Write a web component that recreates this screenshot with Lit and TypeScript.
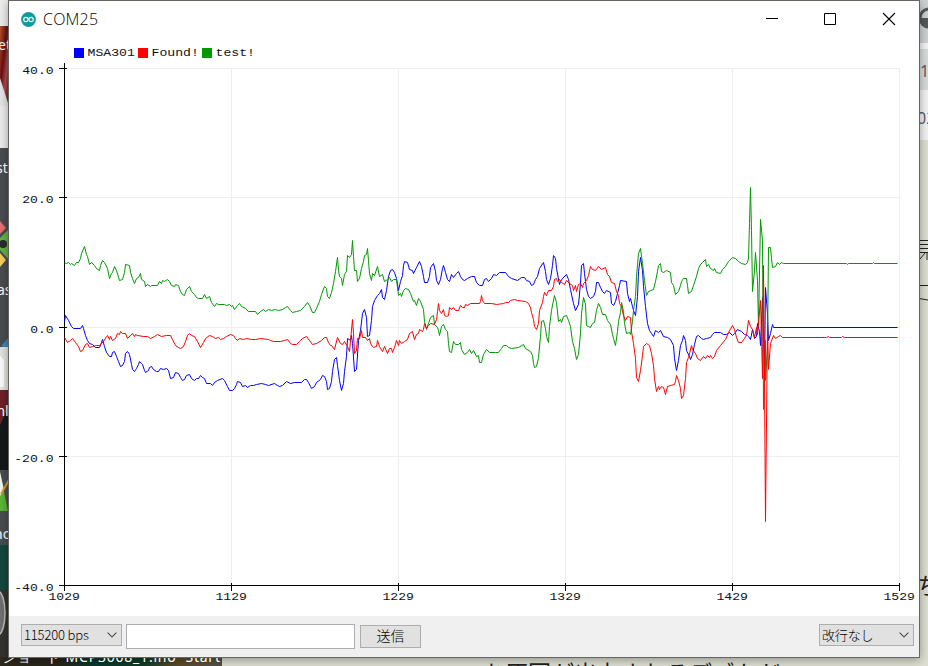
import { LitElement, html, svg, css } from "lit";
import { customElement, property } from "lit/decorators.js";

// Each trace is a list of runs: an origin on the canvas, then x,y pairs in thirds of a pixel.
type Run = [number, number, string];

const BLUE: Run[] = [
  [60, 230, "13,273 16,257 26,272 33,290 40,294 61,296 67,287 71,296 75,315 82,332 88,341 97,344 106,351 118,351 123,338 128,329 133,350 138,368 148,379 153,378 158,368 164,364 170,378 176,393 181,409 187,405 192,394 197,369 203,364 208,374 213,404 218,418 224,424 229,414 234,402 239,395 243,400 248,402 253,420 257,427 264,421 269,411 275,408 281,417 288,424 295,424 302,416 310,418 318,415 325,420 331,445 340,441 347,428 356,430 361,443 367,451 374,448 380,436 388,433 395,445 402,451 408,446 415,446 421,437 427,443 433,445 439,459 450,460 457,465 464,457 473,450 488,445 494,452 502,469 509,480"],
  [220, 230, "37,481 43,475 48,463 53,454 61,458 67,468 76,466 83,472 90,466 100,467 110,463 124,460 135,464 145,465 164,461 171,465 179,469 186,465 199,455 210,460 222,458 245,457 253,448 260,449 265,458 270,470 275,475 283,470 290,458 300,448 308,437 314,440 318,455 322,478 328,474 334,455 337,425 343,389 349,382 353,405 358,450 364,482 369,460 374,425 379,380 383,325 391,330 394,316 397,340 403,425 409,418 415,330 421,300 427,250 433,238 438,262 443,320 448,315 453,270 458,230 464,210 473,197 479,190 484,178 488,202 493,208 498,180 504,140 510,121 517,119 524,126 529,145"],
  [380, 230, "55,180 60,155 66,135 70,105 74,95 82,96 88,117 96,122 101,131 108,112 118,95 124,108 130,140 134,157 141,156 147,140 151,112 160,100 165,125 170,150 176,163 181,148 186,115 191,107 197,128 201,148 207,154 214,134 221,142 228,129 236,125 240,139 247,147 253,152 262,145 275,140 283,140 290,157 299,166 306,165 314,148 320,145 326,153 335,145 341,134 350,137 358,128 376,128 384,139 395,146 413,151 423,142 433,143 440,150 449,155 454,166 460,162 465,149 473,138 479,115 490,98 495,125 500,148 506,163 511,145 516,105 520,77 525,85 530,115"],
  [520, 230, "117,163 121,153 127,145 139,133 146,148 152,178 160,220 167,241 175,222 180,160 185,105 190,100 194,130 199,178 205,200 211,206 219,199 226,184 230,158 236,157 242,172 246,185 252,189 260,182 270,188 274,220 281,226 287,214 292,190 298,165 302,152 318,154 322,190 327,213 332,205 337,228 341,240 346,256 351,200 356,125 361,82 367,120 371,170 376,230 381,280 387,302 393,310 400,318 407,302 415,308 421,302 430,320 441,322 450,329 460,345 464,385 469,421 475,390 481,345 486,330 490,316 496,330 500,360 507,378 512,387 518,372 523,342"],
  [660, 180, "110,468 116,466 123,474 130,477 140,475 150,473 157,464 164,458 180,458 190,464 200,462 208,458 217,466 224,460 233,449 243,455 253,463 262,465 266,470 272,478 277,448 282,475 288,468 293,431 297,455 302,497 307,352 312,563 316,322 321,400 325,482 331,460 337,433 341,442 713,442"],
];

const RED: Run[] = [
  [60, 230, "13,322 22,338 30,332 38,325 46,338 54,350 61,364 68,361 76,342 82,341 89,351 97,350 108,347 118,346 124,340 130,335 138,318 143,316 148,328 152,319 157,331 165,325 172,310 178,312 181,304 186,311 196,309 203,324 212,317 218,310 223,318 227,312 232,317 250,318 262,319 272,325 283,319 292,313 303,318 318,317 331,317 338,328 346,345 354,353 362,356 371,350 376,335 382,316 388,310 395,315 404,319 411,335 421,351 430,337 436,324 448,317 458,320 466,325 474,323"],
  [220, 230, "0,328 10,324 20,318 32,313 40,316 47,324 53,331 59,326 70,328 80,325 93,329 106,327 120,326 145,327 150,332 160,335 180,334 192,330 203,329 212,339 218,344 230,343 237,334 248,325 260,320 269,330 276,343 290,341 304,332 312,322 319,322 324,338 330,345 335,345 344,358 352,322 360,340 367,344 374,334 381,350 388,363 392,330 397,268 400,310 403,370 409,360 413,325 419,325 424,300 428,321 435,321 441,332 447,325 450,340 456,348 460,352 468,350 473,331 479,348 487,364 494,350 502,369 508,355 514,356 518,368 523,352 530,330"],
  [380, 230, "55,346 59,332 65,341 73,335 82,328 88,309 96,305 103,328 110,314 116,310 119,298 126,304 130,298 134,280 140,296 146,285 152,279 162,282 169,268 172,245 175,220 179,240 185,249 190,239 194,256 200,259 206,255 209,232 215,238 221,231 226,242 234,240 240,226 246,232 252,232 257,222 261,227 272,220 298,220 301,213 305,197 308,212 313,220 335,221 350,223 370,220 376,216 384,218 392,211 404,209 412,212 435,214 444,220 450,232 455,247 460,268 464,290 470,298 475,280 479,242 486,218 490,200 494,188 500,197 506,182 514,180 521,170 524,148 530,145"],
  [520, 230, "113,155 118,148 124,158 132,163 140,152 147,160 156,167 161,181 166,166 170,184 174,164 180,161 186,173 191,160 200,152 206,135 211,110 218,117 225,120 235,109 243,117 255,113 261,132 268,138 275,158 283,160 288,185 295,195 299,220 305,230 310,255 316,270 321,260 331,262 335,305 340,340 346,385 350,443 355,455 360,420 366,375 371,350 379,340 388,346 393,370 399,405 404,445 409,485 415,468 419,478 424,468 430,473 436,493 442,470 450,466 463,463 467,455 469,436 474,450 480,475 484,506 490,495 495,445 499,398 505,382"],
  [660, 180, "94,497 98,508 106,521 113,535 121,541 130,528 135,534 142,526 148,533 152,526 156,535 162,528 170,512 180,497 195,477 205,458 217,436 224,448 230,472 236,488 244,486 252,474 260,466 266,421 271,438 277,447 282,472 288,443 291,462 296,430 301,361 304,470 307,596 311,256 314,600 317,1025 321,433 326,569 331,490 340,466 347,475 354,470 362,467 368,472 500,472 504,469 508,472 544,472 548,469 552,472 713,472"],
];

const GREEN: Run[] = [
  [60, 230, "13,98 20,101 25,97 30,104 35,99 43,105 48,98 55,97 60,85 65,70 73,50 78,72 82,80 88,102 93,98 102,107 108,116 118,121 122,105 127,92 134,98 142,115 148,145 153,131 158,128 163,108 169,122 178,150 187,148 192,128 197,104 208,106 212,128 217,145 223,160 228,146 234,142 240,130 245,148 252,154 257,168 262,163 270,169 275,166 291,166 298,154 303,159 308,152 314,155 322,149 328,153 335,165 342,169 347,162 354,167 361,183 367,192 373,195 380,177 388,170 395,184 402,193 408,202 415,205 428,204 434,194 440,204 449,200 454,218 463,228 468,221 475,223 494,223 500,226 508,223"],
  [220, 230, "35,230 38,227 44,237 51,226 58,221 65,229 75,235 85,243 106,243 113,253 122,243 129,239 137,243 146,239 155,241 167,238 175,242 187,239 195,232 203,228 210,240 218,247 230,243 242,240 252,228 262,217 268,225 276,246 283,247 290,234 297,215 305,193 313,169 319,174 323,198 329,205 335,187 339,160 345,125 352,82 356,120 359,138 364,145 368,166 374,132 379,125 383,77 388,82 394,72 397,30 401,80 403,121 409,122 413,154 419,146 424,115 430,95 434,75 440,73 442,55 445,90 448,130 454,151 458,131 464,135 472,109 479,139 486,132 494,154 503,148 508,142 514,153 520,148 529,149"],
  [380, 230, "55,195 60,190 64,198 70,180 76,175 84,178 92,190 99,213 103,210 109,225 116,205 122,215 129,238 134,275 139,298 146,280 152,262 160,255 164,282 171,293 175,302 179,316 185,290 191,283 196,298 201,305 205,340 209,363 214,367 220,335 225,343 234,344 240,338 245,358 254,373 262,367 269,358 275,371 281,361 289,380 295,375 299,397 304,397 311,373 320,359 329,366 345,367 354,366 363,355 370,346 378,346 385,353 395,355 415,352 430,344 437,355 450,365 456,377 460,400 464,412 470,408 475,382 480,320 485,275 490,271 495,295 500,320 505,337 509,290 515,240 523,197 528,217 536,274"],
  [520, 230, "120,268 124,278 130,260 140,257 146,272 152,290 158,335 163,355 169,388 175,372 181,310 185,250 190,203 195,222 200,286 210,291 217,280 224,278 229,240 236,221 241,233 247,254 256,252 262,272 270,284 276,312 281,325 286,346 291,305 296,275 300,248 304,217 309,245 314,280 319,309 328,307 332,313 337,275 341,240 345,200 350,140 356,70 361,55 367,100 373,150 379,195 386,184 400,179 406,155 411,125 415,106 421,100 425,124 431,127 438,122 450,127 455,156 461,165 467,192 475,183 480,165 485,155 490,146 498,145 502,165 506,190 513,184 520,165 528,140 535,115"],
  [660, 180, "120,252 128,247 136,238 139,258 145,253 152,265 160,271 164,265 168,277 180,280 188,269 197,260 205,245 217,232 226,235 235,244 245,251 257,254 262,247 265,235 268,130 271,22 275,150 278,335 283,270 286,217 291,300 296,440 301,118 307,180 310,689 315,480 317,600 321,500 326,202 332,202 335,235 338,263 346,260 353,248 359,253 363,248 369,251 558,251 561,253 564,251 636,251 639,248 642,251 713,251"],
];

// Snap every sample to the centre of its pixel.
const trace = (runs: Run[]) =>
  runs
    .flatMap(([ox, oy, pts]) =>
      pts.split(" ").map((p) => {
        const [x, y] = p.split(",").map(Number);
        return `${Math.floor(ox + x / 3) + 0.5},${Math.floor(oy + y / 3) + 0.5}`;
      })
    )
    .join(" ");

@customElement("serial-plot")
export class SerialPlot extends LitElement {
  static styles = css`
    :host { display: block; height: 578px; }
    svg { display: block; }
    .grid { stroke: #eeeeee; stroke-width: 1; shape-rendering: crispEdges; }
    .axis { stroke: #000; stroke-width: 1; shape-rendering: crispEdges; }
    .line { fill: none; stroke-width: 1; stroke-linejoin: bevel; }
    .blue { stroke: #0000ff; }
    .red { stroke: #ff0000; }
    .green { stroke: #009900; }
    text { font: 11.5px "Liberation Mono", monospace; fill: #111; }
  `;
  private label(x: number, y: number, t: string) {
    return svg`<text x=${x} y=${y} textLength=${t.length * 8 - 0.6} lengthAdjust="spacingAndGlyphs">${t}</text>`;
  }
  render() {
    const ys: [string, number][] = [["40.0", 68.5], ["20.0", 197.5], ["0.0", 327.5], ["-20.0", 456.5], ["-40.0", 585.5]];
    const xs: [string, number][] = [["1029", 64.5], ["1129", 231.5], ["1229", 398.5], ["1329", 565.5], ["1429", 732.5], ["1529", 899.5]];
    const legend: [string, string, number][] = [["MSA301", "#0000ff", 74], ["Found!", "#ff0000", 138], ["test!", "#009900", 202]];
    return html`<svg width="910" height="578" viewBox="9 38 910 578">
      ${legend.map(([t, c, x]) => svg`<rect x=${x} y="48" width="10" height="10" fill=${c}></rect>${this.label(x + 13.5, 56, t)}`)}
      ${ys.slice(0, 4).map(([, y]) => svg`<line class="grid" x1="65" x2="900" y1=${y} y2=${y}></line>`)}
      ${xs.slice(1).map(([, x]) => svg`<line class="grid" x1=${x} x2=${x} y1="68" y2="585"></line>`)}
      <path class="axis" d="M64.5 63V591M59 585.5H900"></path>
      ${ys.map(([t, y]) => svg`<line class="axis" x1="59" x2="67" y1=${y} y2=${y}></line>${this.label(54.2 - t.length * 8, y + 5, t)}`)}
      ${xs.map(([t, x]) => svg`<line class="axis" x1=${x} x2=${x} y1="583" y2="591"></line>${this.label(x - 16, 600, t)}`)}
      <polyline class="line blue" points=${trace(BLUE)}></polyline>
      <polyline class="line green" points=${trace(GREEN)}></polyline>
      <polyline class="line red" points=${trace(RED)}></polyline>
    </svg>`;
  }
}

@customElement("combo-box")
export class ComboBox extends LitElement {
  static styles = css`
    :host { display: block; }
    .box { box-sizing: border-box; height: 22px; display: flex; align-items: center; justify-content: space-between;
      padding: 0 4px 0 2px; background: #e1e1e1; border: 1px solid #adadad; }
    .text { font: 300 13px/20px "Noto Sans CJK JP", sans-serif; letter-spacing: -0.15px; white-space: nowrap; color: #000; }
    svg { display: block; }
    path { fill: none; stroke: #505050; stroke-width: 1.1; }
  `;
  @property() label = "";
  render() {
    return html`<div class="box"><span class="text">${this.label}</span>
      <svg width="10" height="6" viewBox="0 0 10 6"><path d="M.6 .6L5 5L9.4 .6"></path></svg></div>`;
  }
}

@customElement("app-root")
export class AppRoot extends LitElement {
  static styles = css`
    :host { display: block; position: relative; width: 928px; height: 666px; overflow: hidden; background: #dedfd2; }
    .desk { position: absolute; left: 0; top: 0; }
    .window { position: absolute; left: 8px; top: 0; width: 912px; height: 658px; box-sizing: border-box;
      border: 1px solid #65665f; background: #fff; display: flex; flex-direction: column;
      box-shadow: 0 2px 9px rgba(0, 0, 0, 0.35); }
    .title { height: 37px; display: flex; align-items: center; padding-left: 12px; }
    .name { font: 300 16px/34px "Open Sans", "Noto Sans", sans-serif; margin: 0 0 2px 7px; flex: 1; color: #000; letter-spacing: 0.2px; }
    .controls { display: block; }
    .bar { flex: 1; background: #f0f0f0; display: flex; align-items: flex-start; padding: 8px 5px 0 12px; }
    .rate { width: 101px; }
    .entry { box-sizing: border-box; width: 229px; height: 25px; margin-left: 4px; border: 1px solid #abadb3; background: #fff; }
    .send { box-sizing: border-box; width: 61px; height: 23px; margin: 1px 0 0 5px; border: 1px solid #adadad; background: #e1e1e1;
      font: 300 14px/19px "Noto Sans CJK JP", sans-serif; text-align: center; padding: 0 0 2px; color: #000; }
    .ending { width: 95px; margin-left: auto; }
    .icon-name { font: 14px "Noto Sans", sans-serif; fill: #fff; }
    .page-text { font: 23px "Noto Sans CJK JP", sans-serif; fill: #222; }
    .small { font: 16px "Open Sans", sans-serif; fill: #555; }
  `;
  render() {
    return html`
      <svg class="desk" width="928" height="666">
        <defs>
          <linearGradient id="photo" x1="0" y1="0" x2="1" y2="1">
            <stop offset="0" stop-color="#b85528"></stop><stop offset=".4" stop-color="#681014"></stop>
            <stop offset=".65" stop-color="#b04c54"></stop><stop offset="1" stop-color="#631018"></stop>
          </linearGradient>
          <linearGradient id="foot"><stop offset="0" stop-color="#30291d"></stop><stop offset=".28" stop-color="#26251b"></stop>
            <stop offset=".42" stop-color="#07382a"></stop><stop offset=".65" stop-color="#113a28"></stop>
            <stop offset=".8" stop-color="#5a4a25"></stop><stop offset="1" stop-color="#555047"></stop></linearGradient>
        </defs>
        <rect width="9" height="666" fill="#4a4d50"></rect>
        <rect width="9" height="148" fill="#ececec"></rect>
        <rect y="26" width="9" height="79" fill="url(#photo)"></rect>
        <path d="M0 78L9 106H0z" fill="#e4e4e4"></path>
        <path d="M0 221L6 228L0 234z" fill="#e76e72"></path>
        <path d="M9 229V260L0 250V238z" fill="#66b247"></path>
        <circle cx="3" cy="244" r="4" fill="#292d2e"></circle>
        <path d="M0 253L6 260L0 267z" fill="#f0d060"></path>
        <path d="M2 345L9 337V348H3z" fill="#3e86bb"></path>
        <path d="M0 347H9V390H0z" fill="#e2e2de"></path>
        <path d="M0 356L4 360V387H0z" fill="#fafafa"></path>
        <path d="M0 390H9V403L0 425z" fill="#6e2027"></path>
        <path d="M0 425L9 405V470H0z" fill="#15191a"></path>
        <path d="M0 472L8 511H0z" fill="#5cb537"></path>
        <path d="M0 472L4 490L0 496z" fill="#f2f4ef"></path>
        <path d="M1 494L9 480" stroke="#dc9b25" stroke-width="2"></path>
        <rect y="545" width="9" height="45" fill="#124840"></rect>
        <rect y="590" width="9" height="68" fill="#35332f"></rect>
        <ellipse cx="-2" cy="613" rx="7" ry="22" fill="#707070" stroke="#bcbcbc" stroke-width="1.5"></ellipse>
        <text class="icon-name" x="-2" y="50">et</text><text class="icon-name" x="-4" y="173">st</text>
        <text class="icon-name" x="-3" y="295">as</text><text class="icon-name" x="-8" y="416">ml</text>
        <text class="icon-name" x="-6" y="539">nc</text>
        <rect y="657" width="222" height="9" fill="url(#foot)"></rect>
        <rect x="920" width="8" height="43" fill="#cdd1d5"></rect>
        <circle cx="929" cy="18" r="9" fill="none" stroke="#55585c" stroke-width="3"></circle>
        <path d="M920 18h8v10q-7-2-8-10z" fill="#55585c"></path>
        <rect x="920" y="43" width="8" height="6" fill="#f4f4f4"></rect>
        <rect x="920" y="49" width="8" height="41" fill="#d8dbdc"></rect>
        <rect x="920" y="90" width="8" height="50" fill="#f2f2f2"></rect>
        <text class="small" x="920" y="77">1</text><text class="small" x="917" y="124">02</text>
        <path d="M919 240.5h9M919 244.5h9M919 248.5h9M919 252.5h9M919 285.5h9M919 298.5l9 1.5M920 259l5-6M927 253v7" stroke="#222" fill="none"></path>
        <text class="page-text" x="917" y="594">ち</text>
        <text class="page-text" x="482" y="682">を原因が出力されるデゴただ</text>
      </svg>
      <div class="window">
        <div class="title">
          <svg width="15" height="15" viewBox="0 0 15 15">
            <circle cx="7.5" cy="7.5" r="7.4" fill="#129a9e"></circle>
            <g fill="none" stroke="#e4f5f5" stroke-width="1.2"><circle cx="4.9" cy="7.5" r="2.2"></circle><circle cx="10.1" cy="7.5" r="2.2"></circle></g>
          </svg>
          <span class="name">COM25</span>
          <svg class="controls" width="153" height="37" viewBox="766 1 153 37">
            <path d="M766 18.5h12M824.5 13.5h11v11h-11z" fill="none" stroke="#000"></path>
            <path d="M883 13L895 25M895 13L883 25" fill="none" stroke="#000" stroke-width="1.1"></path>
          </svg>
        </div>
        <serial-plot></serial-plot>
        <div class="bar">
          <combo-box class="rate" label="115200 bps"></combo-box>
          <div class="entry"></div>
          <button class="send">送信</button>
          <combo-box class="ending" label="改行なし"></combo-box>
        </div>
      </div>
      <svg class="desk" width="222" height="666" viewBox="0 0 222 666">
        <svg y="658" width="222" height="8" viewBox="0 658 222 8">
          <text class="icon-name" x="2" y="662" textLength="218">ショート MCP3008_1.ino&#160; Start</text>
        </svg>
      </svg>
    `;
  }
}
